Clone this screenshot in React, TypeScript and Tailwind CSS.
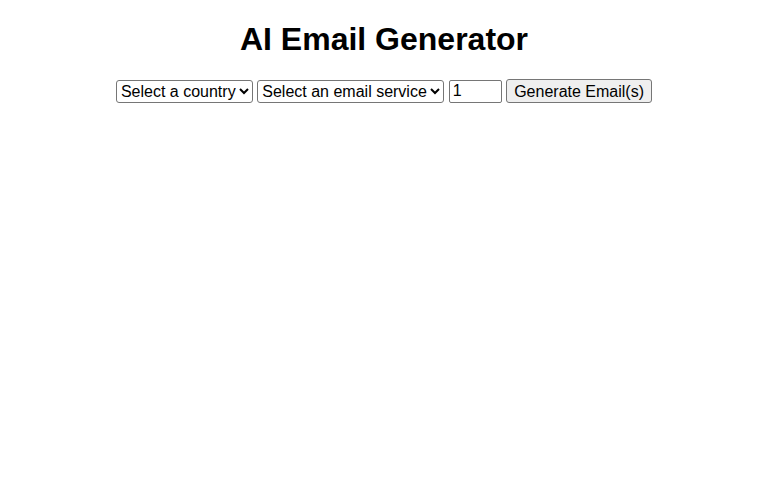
import React from 'react';

const App: React.FC = () => {
    return (
        <div className="min-h-[480px] bg-white text-black text-center font-['Liberation_Sans',Arial,sans-serif]">
            <h1 className="text-[32px] font-bold leading-[37px] pt-[21px] pb-[21px]">AI Email Generator</h1>
            <div className="flex justify-center items-center gap-[4.4px] text-base">
                <select className="h-[23px] w-[137px] border border-[#767676] rounded-[3px] bg-white text-black">
                    <option>Select a country</option>
                </select>
                <select className="h-[23px] w-[187px] border border-[#767676] rounded-[3px] bg-white text-black">
                    <option>Select an email service</option>
                </select>
                <input
                    type="number"
                    defaultValue={1}
                    className="h-[23px] w-[53px] border border-[#767676] rounded-[2px] bg-white px-[3px] text-left text-black"
                />
                <button className="h-[24px] w-[146px] border border-[#767676] rounded-[3px] bg-[#efefef] px-[6px] text-black">
                    Generate Email(s)
                </button>
            </div>
        </div>
    );
};

export default App;
